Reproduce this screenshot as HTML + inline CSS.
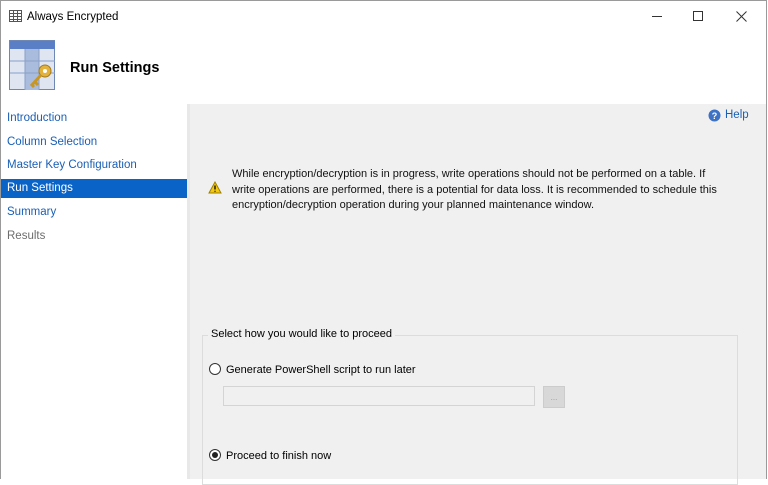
<!DOCTYPE html>
<html><head><style>
*{margin:0;padding:0;box-sizing:border-box}
body{width:768px;height:479px;overflow:hidden;background:#fff;font-family:"Liberation Sans",sans-serif;font-size:12px;color:#000;position:relative}
.frame{position:absolute;left:0;top:0;width:767px;height:479px;border:1px solid #9a9a9a;border-bottom:none}
.abs{position:absolute}
.nav a{position:absolute;left:7px;color:#1a5fb4;font-size:11.5px;white-space:nowrap}
</style></head><body>
<div class="frame"></div>
<svg class="abs" style="left:9px;top:10px" width="14" height="13" viewBox="0 0 14 13"><rect x="0.5" y="0.5" width="12" height="11" fill="#fff" stroke="#555"/><path d="M0.5 3.5H12.5M0.5 6.5H12.5M0.5 9.5H12.5M4.5 0.5V11.5M8.5 0.5V11.5" stroke="#555"/></svg>
<div class="abs" style="left:27px;top:11px;font-size:11.5px">Always Encrypted</div>
<div class="abs" style="left:652px;top:16px;width:10px;height:1px;background:#333"></div>
<div class="abs" style="left:693px;top:11px;width:10px;height:10px;border:1px solid #333"></div>
<svg class="abs" style="left:736px;top:11px" width="11" height="11"><path d="M0.5 0.5L10.5 10.5M10.5 0.5L0.5 10.5" stroke="#333"/></svg>
<svg class="abs" style="left:9px;top:40px" width="48" height="52" viewBox="0 0 48 52">
<rect x="0.5" y="0.5" width="45" height="49" fill="#dfe6f2" stroke="#6f87b4"/>
<rect x="1" y="1" width="45" height="8" fill="#5b7fc6"/>
<rect x="16" y="9" width="14" height="41" fill="#a9bcdd"/>
<path d="M1 21H46M1 33H46M16 9V50M30 9V50" stroke="#8aa0c8"/>
<circle cx="36" cy="31" r="6" fill="#e3b23c" stroke="#a47a1a"/>
<circle cx="36" cy="31" r="2" fill="#fff"/>
<path d="M32 35L22 46M26 42l3 3M23 45l2 2" stroke="#c9961f" stroke-width="3"/>
</svg>
<div class="abs" style="left:70px;top:60px;font-size:14.5px;font-weight:bold">Run Settings</div>
<div class="abs" style="left:1px;top:104px;width:186px;height:375px;background:#fff"></div>
<div class="abs" style="left:187px;top:104px;width:3px;height:375px;background:#e8e8e8"></div>
<div class="abs" style="left:190px;top:104px;width:576px;height:375px;background:#f0f0f0"></div>
<div class="nav">
<a style="top:112px">Introduction</a>
<a style="top:136px">Column Selection</a>
<a style="top:159px">Master Key Configuration</a>
<div class="abs" style="left:1px;top:179px;width:186px;height:19px;background:#0a64c8"></div>
<a style="top:182px;color:#fff">Run Settings</a>
<a style="top:206px">Summary</a>
<a style="top:230px;color:#6d6d6d">Results</a>
</div>
<svg class="abs" style="left:708px;top:109px" width="13" height="13"><circle cx="6.5" cy="6.5" r="6" fill="#3d72c4"/><text x="6.5" y="10" font-size="9" font-weight="bold" fill="#fff" text-anchor="middle" font-family="Liberation Sans">?</text></svg>
<div class="abs" style="left:725px;top:109px;color:#1a5fb4;font-size:11.5px">Help</div>
<svg class="abs" style="left:208px;top:181px" width="14" height="13"><path d="M7 1L13 12H1Z" fill="#f2c811" stroke="#a08000"/><path d="M7 4.5V8.5M7 9.8V10.8" stroke="#000" stroke-width="1.3"/></svg>
<div class="abs" style="left:232px;top:167px;width:495px;font-size:11px;line-height:15.5px;color:#111">While encryption/decryption is in progress, write operations should not be performed on a table. If write operations are performed, there is a potential for data loss. It is recommended to schedule this encryption/decryption operation during your planned maintenance window.</div>
<div class="abs" style="left:202px;top:335px;width:536px;height:150px;border:1px solid #dcdcdc"></div>
<div class="abs" style="left:208px;top:328px;background:#f0f0f0;padding:0 3px;font-size:11px">Select how you would like to proceed</div>
<div class="abs" style="left:209px;top:363px;width:12px;height:12px;border:1px solid #333;border-radius:50%;background:#fff"></div>
<div class="abs" style="left:226px;top:364px;font-size:11px">Generate PowerShell script to run later</div>
<div class="abs" style="left:223px;top:386px;width:312px;height:20px;border:1px solid #d4d4d4;background:#f0f0f0"></div>
<div class="abs" style="left:543px;top:386px;width:22px;height:22px;border:1px solid #ccc;background:#d8d8d8;font-size:8px;color:#999;text-align:center;line-height:22px">...</div>
<div class="abs" style="left:209px;top:449px;width:12px;height:12px;border:1px solid #333;border-radius:50%;background:#fff"></div>
<div class="abs" style="left:212px;top:452px;width:6px;height:6px;border-radius:50%;background:#222"></div>
<div class="abs" style="left:226px;top:450px;font-size:11px">Proceed to finish now</div>
</body></html>
